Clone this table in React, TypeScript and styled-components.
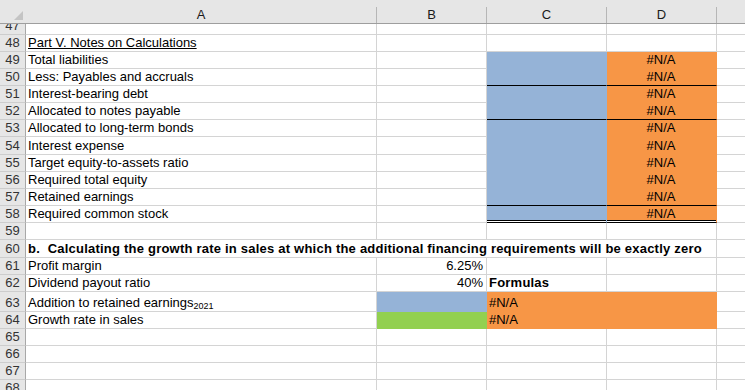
import React from "react";
import styled, { createGlobalStyle, css } from "styled-components";

const GRID = "#d4d4d4";
const HEAD_BG = "#e6e6e6";
const FILLS = {
  blue: "#95b3d7",
  orange: "#f79646",
  green: "#92d050",
};
const COLUMNS = "26px 351px 110px 120px 110px 110px";

type Fill = keyof typeof FILLS;
type Edge = "thin" | "double";

type CellDef = {
  text?: React.ReactNode;
  fill?: Fill;
  align?: "left" | "center" | "right";
  bold?: boolean;
  underline?: boolean;
  span?: number;
  edge?: Edge;
};

type RowDef = { n: number; h: number; cells: CellDef[] };

const GlobalStyle = createGlobalStyle`
  html, body {
    margin: 0;
    padding: 0;
    background: #fff;
    overflow: hidden;
  }
  body {
    font-family: "Liberation Sans", Arial, sans-serif;
  }
`;

const Sheet = styled.div`
  width: 745px;
  height: 390px;
  overflow: hidden;
  font-size: 13px;
  color: #000;
`;

const HeaderRow = styled.div`
  display: grid;
  grid-template-columns: ${COLUMNS};
  height: 24px;
  box-sizing: border-box;
  padding-top: 7px;
  background: ${HEAD_BG};
  border-bottom: 1px solid #9e9e9e;
`;

const Corner = styled.div`
  display: flex;
  justify-content: flex-end;
  align-items: flex-end;
  padding: 0 3px 3px 0;

  &::after {
    content: "";
    border-left: 9px solid transparent;
    border-bottom: 9px solid #c4c4c4;
  }
`;

const ColHead = styled.div`
  border-right: 1px solid #b6b6b6;
  text-align: center;
  line-height: 15px;
  color: #1a1a1a;
`;

const Row = styled.div<{ $h: number }>`
  display: grid;
  grid-template-columns: ${COLUMNS};
  height: ${(p) => p.$h}px;
`;

const RowHead = styled.div`
  display: flex;
  align-items: flex-end;
  justify-content: center;
  overflow: hidden;
  background: ${HEAD_BG};
  border-right: 1px solid #a8a8a8;
  border-bottom: 1px solid #cdcdcd;
  line-height: 16px;
  color: #333;
`;

const edgeStyle = (edge?: Edge, fill?: Fill) => {
  if (edge) return "1px solid #000";
  return `1px solid ${fill ? FILLS[fill] : GRID}`;
};

const Cell = styled.div<{
  $fill?: Fill;
  $align?: "left" | "center" | "right";
  $bold?: boolean;
  $underline?: boolean;
  $span?: number;
  $edge?: Edge;
}>`
  grid-column: span ${(p) => p.$span ?? 1};
  display: flex;
  align-items: flex-end;
  justify-content: ${(p) =>
    p.$align === "right" ? "flex-end" : p.$align === "center" ? "center" : "flex-start"};
  padding: 0 3px 0 2px;
  overflow: hidden;
  white-space: pre;
  line-height: 16px;
  background: ${(p) => (p.$fill ? FILLS[p.$fill] : "#fff")};
  border-right: 1px solid ${(p) => (p.$fill ? FILLS[p.$fill] : GRID)};
  border-bottom: ${(p) => edgeStyle(p.$edge, p.$fill)};
  ${(p) =>
    p.$edge === "double" &&
    css`
      box-shadow: inset 0 -1px 0 #fff, inset 0 -2px 0 #000;
    `}
  ${(p) =>
    p.$bold &&
    css`
      font-weight: 700;
      letter-spacing: 0.22px;
    `}
  ${(p) =>
    p.$underline &&
    css`
      text-decoration: underline;
      text-underline-offset: 1px;
    `}
`;

const Text = styled.span`
  display: block;
`;

const Sub = styled.span`
  font-size: 9px;
  vertical-align: -2px;
  line-height: 1;
`;

const empty = (): CellDef[] => [{}, {}, {}, {}, {}];

const noteRow = (n: number, h: number, label: string, edge?: Edge): RowDef => ({
  n,
  h,
  cells: [
    { text: label },
    {},
    { fill: "blue", edge },
    { fill: "orange", text: "#N/A", align: "center", edge },
    {},
  ],
});

const rows: RowDef[] = [
  { n: 47, h: 11, cells: empty() },
  {
    n: 48,
    h: 17,
    cells: [{ text: "Part V. Notes on Calculations", underline: true }, {}, {}, {}, {}],
  },
  noteRow(49, 17, "Total liabilities"),
  noteRow(50, 17, "Less: Payables and accruals", "thin"),
  noteRow(51, 17, "Interest-bearing debt"),
  noteRow(52, 17, "Allocated to notes payable", "thin"),
  noteRow(53, 17, "Allocated to long-term bonds"),
  noteRow(54, 18, "Interest expense"),
  noteRow(55, 17, "Target equity-to-assets ratio"),
  noteRow(56, 17, "Required total equity"),
  noteRow(57, 17, "Retained earnings", "thin"),
  noteRow(58, 17, "Required common stock", "double"),
  { n: 59, h: 17, cells: empty() },
  {
    n: 60,
    h: 18,
    cells: [
      {
        text: "b.  Calculating the growth rate in sales at which the additional financing requirements will be exactly zero",
        bold: true,
        span: 4,
      },
      {},
    ],
  },
  {
    n: 61,
    h: 17,
    cells: [{ text: "Profit margin" }, { text: "6.25%", align: "right" }, {}, {}, {}],
  },
  {
    n: 62,
    h: 17,
    cells: [
      { text: "Dividend payout ratio" },
      { text: "40%", align: "right" },
      { text: "Formulas", bold: true },
      {},
      {},
    ],
  },
  {
    n: 63,
    h: 20,
    cells: [
      {
        text: (
          <>
            Addition to retained earnings<Sub>2021</Sub>
          </>
        ),
      },
      { fill: "blue" },
      { fill: "orange", text: "#N/A", span: 2 },
      {},
    ],
  },
  {
    n: 64,
    h: 17,
    cells: [
      { text: "Growth rate in sales" },
      { fill: "green" },
      { fill: "orange", text: "#N/A", span: 2 },
      {},
    ],
  },
  { n: 65, h: 17, cells: empty() },
  { n: 66, h: 17, cells: empty() },
  { n: 67, h: 17, cells: empty() },
  { n: 68, h: 17, cells: empty() },
];

const App = () => {
  return (
    <>
      <GlobalStyle />
      <Sheet>
        <HeaderRow>
          <Corner />
          {["A", "B", "C", "D", "E"].map((c) => (
            <ColHead key={c}>{c}</ColHead>
          ))}
        </HeaderRow>
        {rows.map((row) => (
          <Row key={row.n} $h={row.h}>
            <RowHead>{row.n}</RowHead>
            {row.cells.map((c, i) => (
              <Cell
                key={i}
                $fill={c.fill}
                $align={c.align}
                $bold={c.bold}
                $underline={c.underline}
                $span={c.span}
                $edge={c.edge}
              >
                {c.text && <Text>{c.text}</Text>}
              </Cell>
            ))}
          </Row>
        ))}
      </Sheet>
    </>
  );
};

export default App;
